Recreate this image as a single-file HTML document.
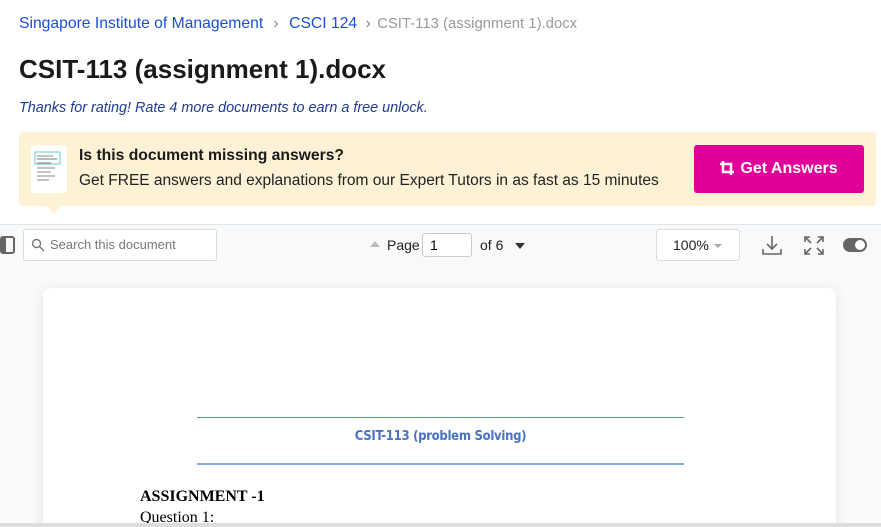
<!DOCTYPE html>
<html><head><style>
*{margin:0;padding:0;box-sizing:border-box}
html,body{width:881px;height:527px;overflow:hidden}
body{background:#fff;font-family:"Liberation Sans",Arial,sans-serif;position:relative}
.a{position:absolute}
</style></head><body>
<div class="a" style="left:19px;top:15px;font-size:15.7px;color:#1a4fd6;white-space:nowrap">Singapore Institute of Management <span style="color:#888;margin:0 6px">›</span> CSCI 124 <span style="color:#888;margin:0 2px 0 4px">›</span> <span style="color:#9a9a9a;font-size:14.9px">CSIT-113 (assignment 1).docx</span></div>
<div class="a" style="left:19px;top:54px;font-size:26px;font-weight:bold;color:#1a1a1a">CSIT-113 (assignment 1).docx</div>
<div class="a" style="left:19px;top:100px;font-size:14.4px;font-style:italic;color:#1f3a93">Thanks for rating! Rate 4 more documents to earn a free unlock.</div>
<div class="a" style="left:19px;top:132px;width:857px;height:74px;background:#fdf1d6;border-radius:4px"></div>
<div class="a" style="left:45px;top:205px;width:0;height:0;border-left:9px solid transparent;border-right:9px solid transparent;border-top:9px solid #fdf1d6"></div>
<div class="a" style="left:31px;top:145px;width:36px;height:48px;background:#fff;border-radius:3px">
<svg width="36" height="48"><rect x="4" y="7" width="25" height="12" fill="none" stroke="#6cc" stroke-width="1"/><g stroke="#888" stroke-width="1"><line x1="6" y1="11" x2="22" y2="11"/><line x1="6" y1="14" x2="26" y2="14" stroke="#bbb" stroke-width="2"/><line x1="6" y1="18" x2="20" y2="18"/><line x1="6" y1="23" x2="24" y2="23"/><line x1="6" y1="27" x2="20" y2="27"/><line x1="6" y1="31" x2="24" y2="31"/><line x1="6" y1="35" x2="18" y2="35"/></g></svg></div>
<div class="a" style="left:79px;top:147px;font-size:15.7px;font-weight:bold;color:#1a1a1a">Is this document missing answers?</div>
<div class="a" style="left:79px;top:172px;font-size:15.5px;color:#222;white-space:nowrap">Get FREE answers and explanations from our Expert Tutors in as fast as 15 minutes</div>
<div class="a" style="left:694px;top:145px;width:170px;height:48px;background:#e0009a;border-radius:3px;color:#fff;font-weight:bold;font-size:16px;line-height:48px;text-align:center">
<svg width="14" height="14" style="vertical-align:-2px;margin-right:6px" fill="none" stroke="#fff" stroke-width="2.5"><path d="M3 0V11H14M0 3H11V14"/></svg>Get Answers</div>
<div class="a" style="left:0;top:224px;width:881px;height:40px;background:#f8f9fb;border-top:1px solid #e2e5ea"></div>
<div class="a" style="left:0;top:236px;width:15px;height:18px;border:2px solid #666;border-left:6px solid #666;border-radius:3px"></div>
<div class="a" style="left:23px;top:229px;width:194px;height:32px;background:#fff;border:1px solid #ddd;border-radius:3px;font-size:13px;color:#777;line-height:30px;padding-left:26px">Search this document</div>
<svg class="a" style="left:31px;top:238px" width="14" height="14" fill="none" stroke="#777" stroke-width="1.4"><circle cx="5.5" cy="5.5" r="4"/><path d="M8.5 8.5L13 13"/></svg>
<div class="a" style="left:370px;top:241px;width:0;height:0;border-left:5px solid transparent;border-right:5px solid transparent;border-bottom:6px solid #bbb"></div>
<div class="a" style="left:387px;top:237px;font-size:14px;color:#222">Page</div>
<div class="a" style="left:422px;top:233px;width:50px;height:24px;background:#fff;border:1px solid #ccc;border-radius:3px;font-size:14px;line-height:22px;padding-left:7px">1</div>
<div class="a" style="left:480px;top:237px;font-size:14px;color:#222">of 6</div>
<div class="a" style="left:515px;top:243px;width:0;height:0;border-left:5px solid transparent;border-right:5px solid transparent;border-top:6px solid #333"></div>
<div class="a" style="left:656px;top:229px;width:84px;height:32px;background:#fff;border:1px solid #ddd;border-radius:3px;font-size:14px;line-height:30px;padding-left:16px;color:#222">100%</div>
<div class="a" style="left:714px;top:244px;width:0;height:0;border-left:4px solid transparent;border-right:4px solid transparent;border-top:4px solid #aaa"></div>
<svg class="a" style="left:761px;top:234px" width="22" height="22" fill="none" stroke="#666" stroke-width="1.6"><path d="M11 2V15M6 10L11 15L16 10M2 15V20H20V15"/></svg>
<svg class="a" style="left:803px;top:235px" width="22" height="21" fill="none" stroke="#666" stroke-width="1.6"><path d="M2 7V2H7M2 2L8 8M15 2H20V7M20 2L14 8M2 14V19H7M2 19L8 13M15 19H20V14M20 19L14 13"/></svg>
<div class="a" style="left:843px;top:238px;width:24px;height:14px;background:#666;border-radius:7px"><div style="position:absolute;right:2px;top:2px;width:10px;height:10px;border-radius:5px;background:#fff"></div></div>
<div class="a" style="left:0;top:264px;width:881px;height:263px;background:#fafafa"></div>
<div class="a" style="left:43px;top:288px;width:793px;height:250px;background:#fff;border-radius:8px;box-shadow:0 2px 12px rgba(0,0,0,.1)"></div>
<div class="a" style="left:197px;top:417px;width:487px;height:1px;background:#5b86d6"></div>
<div class="a" style="left:197px;top:429px;width:487px;text-align:center;font-size:13px;font-weight:bold;color:#4a72c4;font-family:'DejaVu Sans Condensed','Liberation Sans Narrow',sans-serif;letter-spacing:-0.3px">CSIT-113 (problem Solving)</div>
<div class="a" style="left:197px;top:463px;width:487px;height:2px;background:#8aa8e0"></div>
<div class="a" style="left:140px;top:488px;font-family:'Liberation Serif',serif;font-weight:bold;font-size:16px;color:#000">ASSIGNMENT -1</div>
<div class="a" style="left:140px;top:509px;font-family:'Liberation Serif',serif;font-size:16px;color:#000">Question 1:</div>
<div class="a" style="left:0;top:523px;width:881px;height:4px;background:#ddd"></div>
</body></html>
